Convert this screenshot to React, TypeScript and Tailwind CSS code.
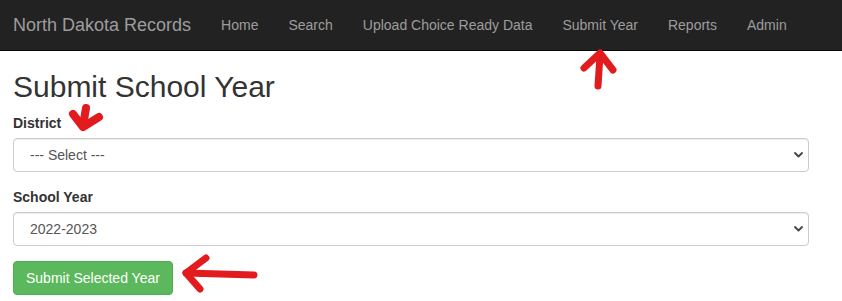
import React from "react";

const Chevron = () => (
  <svg className="absolute right-[5px] top-1/2 -translate-y-1/2 pointer-events-none" width="9" height="6" viewBox="0 0 9 6">
    <path d="M1 1 L4.5 4.5 L8 1" fill="none" stroke="#444" strokeWidth="1.8" strokeLinecap="round" strokeLinejoin="round" />
  </svg>
);

const SelectBox = ({ value }: { value: string }) => (
  <div className="relative w-[796px] h-[34px] border border-[#ccc] rounded-[4px] bg-white shadow-[inset_0_1px_1px_rgba(0,0,0,0.075)] flex items-center pl-[16px] text-[14px] text-[#555]">
    <span>{value}</span>
    <Chevron />
  </div>
);

export default function App() {
  const links = ["Home", "Search", "Upload Choice Ready Data", "Submit Year", "Reports", "Admin"];
  return (
    <div className="relative w-[842px] h-[301px] bg-white overflow-hidden" style={{ fontFamily: '"Liberation Sans", Arial, sans-serif' }}>
      <nav className="h-[51px] bg-[#222] border-b border-[#080808] flex items-start">
        <div className="pl-[13px] pr-[15px] py-[15px] text-[18px] leading-[20px] text-[#9d9d9d]">North Dakota Records</div>
        <div className="flex">
          {links.map((l) => (
            <div key={l} className="px-[15px] py-[15px] text-[14px] leading-[20px] text-[#9d9d9d]">{l}</div>
          ))}
        </div>
      </nav>
      <div className="pl-[13px]">
        <h2 className="mt-[19px] mb-[10px] text-[30px] leading-[33px] text-[#333]">Submit School Year</h2>
        <div className="mb-[15px]">
          <div className="text-[14px] leading-[20px] font-bold text-[#333] mb-[5px]">District</div>
          <SelectBox value="--- Select ---" />
        </div>
        <div className="mb-[15px]">
          <div className="text-[14px] leading-[20px] font-bold text-[#333] mb-[5px]">School Year</div>
          <SelectBox value="2022-2023" />
        </div>
        <button className="h-[34px] px-[12px] text-[14px] leading-[20px] text-white bg-[#5cb85c] border border-[#4cae4c] rounded-[4px]">
          Submit Selected Year
        </button>
      </div>
      <svg className="absolute inset-0 pointer-events-none" width="842" height="301" viewBox="0 0 842 301">
        <g fill="none" stroke="#e21b1f" strokeLinecap="round" strokeLinejoin="round">
          <path d="M598 86 L600 55" strokeWidth="7" />
          <path d="M584 68 L600 53 L613 70" strokeWidth="7" />
          <path d="M73 114 L83 127 L99 117" strokeWidth="8" />
          <path d="M86 108 L83 126" strokeWidth="8" />
          <path d="M186 273 L254 275" strokeWidth="7" />
          <path d="M206 258 L186 273 L200 289" strokeWidth="7" />
        </g>
      </svg>
    </div>
  );
}
